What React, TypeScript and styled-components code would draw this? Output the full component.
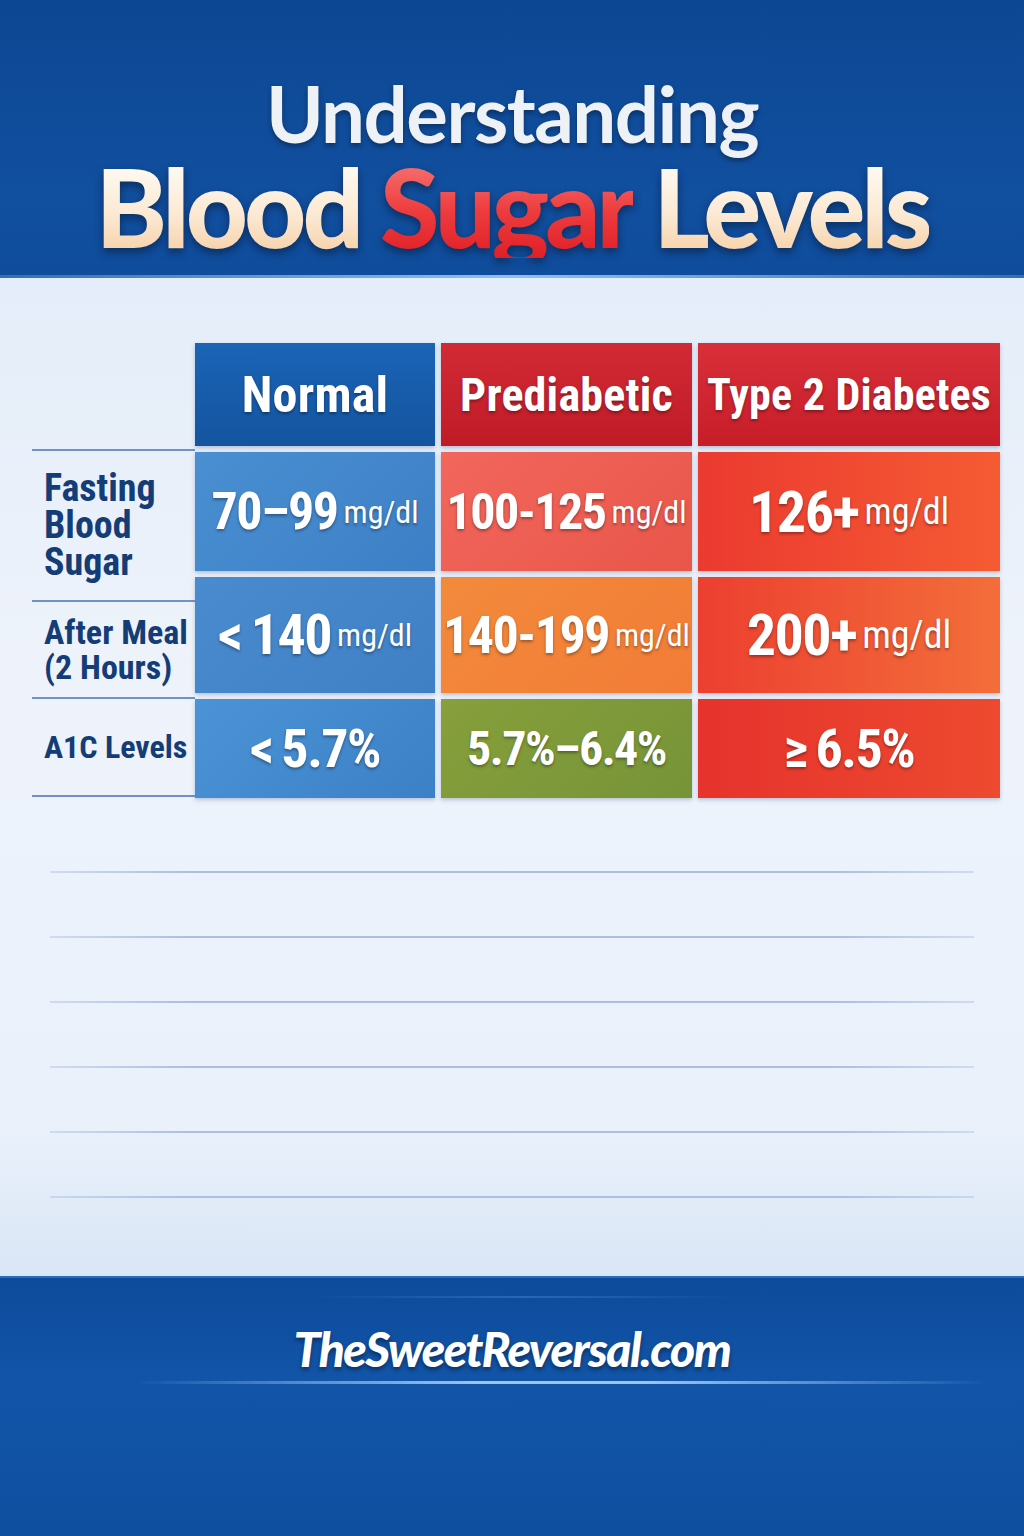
import React from 'react';
import styled, { createGlobalStyle } from 'styled-components';

const GlobalStyle = createGlobalStyle`
  html, body {
    margin: 0;
    padding: 0;
  }
  body {
    font-family: Lato, sans-serif;
  }
`;

const condensed = `"Roboto Condensed", Roboto, Lato, sans-serif`;

const Page = styled.div`
  width: 1024px;
  height: 1536px;
  display: flex;
  flex-direction: column;
  overflow: hidden;
`;

const Header = styled.header`
  height: 278px;
  position: relative;
  display: flex;
  flex-direction: column;
  align-items: center;
  padding-top: 72px;
  box-sizing: border-box;
  background: linear-gradient(180deg, #0c4793 0%, #114f9f 70%, #0f4c9c 100%);
  &::after {
    content: '';
    position: absolute;
    left: 0;
    right: 0;
    bottom: 0;
    height: 3px;
    background: linear-gradient(90deg, rgba(140, 190, 240, 0.3), #8fc0f0 50%, rgba(140, 190, 240, 0.3));
  }
`;

const Eyebrow = styled.div`
  font-family: Lato, sans-serif;
  font-weight: 700;
  font-size: 78px;
  line-height: 82px;
  letter-spacing: -1.5px;
  color: #eef2f7;
  text-shadow: 0 3px 5px rgba(0, 0, 0, 0.35);
`;

const Headline = styled.h1`
  margin: 0;
  font-family: Lato, sans-serif;
  font-weight: 900;
  font-size: 108px;
  line-height: 104px;
  letter-spacing: -4px;
  display: flex;
  gap: 20px;
  filter: drop-shadow(0 4px 4px rgba(0, 0, 0, 0.4));
`;

const Word = styled.span<{ $red?: boolean }>`
  background: ${p =>
    p.$red
      ? 'linear-gradient(180deg, #f77a78 0%, #ee3c3e 55%, #df1f27 100%)'
      : 'linear-gradient(180deg, #fffefa 0%, #fbe8d2 60%, #f6cfa5 100%)'};
  -webkit-background-clip: text;
  background-clip: text;
  color: transparent;
`;

const Main = styled.main`
  flex: 1;
  background: linear-gradient(180deg, #e4edf9 0%, #eef3fb 40%, #eaf1fb 85%, #d9e6f6 100%);
  padding: 65px 24px 0 32px;
  display: flex;
  flex-direction: column;
`;

const Table = styled.div`
  display: flex;
`;

const LabelColumn = styled.div`
  width: 163px;
  display: flex;
  flex-direction: column;
  padding-top: 106px;
`;

const Label = styled.div<{ $h: number; $size: number; $lh: number }>`
  height: ${p => p.$h}px;
  box-sizing: border-box;
  border-top: 2px solid #6f93c6;
  display: flex;
  align-items: center;
  padding-left: 12px;
  font-family: ${condensed};
  font-weight: 700;
  font-size: ${p => p.$size}px;
  line-height: ${p => p.$lh}px;
  white-space: nowrap;
  color: #143d77;
  &:last-child {
    border-bottom: 2px solid #6f93c6;
  }
`;

const Grid = styled.div`
  display: grid;
  grid-template-columns: 240px 251px 302px;
  grid-template-rows: 103px 119px 116px 99px;
  column-gap: 6px;
  row-gap: 6px;
`;

const Cell = styled.div<{ $bg: string }>`
  background: ${p => p.$bg};
  display: flex;
  align-items: center;
  justify-content: center;
  box-shadow: 0 2px 4px rgba(20, 50, 100, 0.25);
  color: #fff;
  font-family: ${condensed};
  text-shadow: 0 2px 3px rgba(0, 0, 0, 0.35);
  white-space: nowrap;
`;

const HeadText = styled.span<{ $size: number }>`
  font-weight: 700;
  font-size: ${p => p.$size}px;
  letter-spacing: 0.2px;
`;

const Num = styled.span<{ $size: number }>`
  font-weight: 700;
  font-size: ${p => p.$size}px;
  letter-spacing: -1.5px;
`;

const Unit = styled.span<{ $size: number }>`
  font-weight: 400;
  font-size: ${p => p.$size}px;
  margin-left: 6px;
`;

const Rules = styled.div`
  margin-top: 73px;
  padding: 0 26px 0 18px;
  display: flex;
  flex-direction: column;
  gap: 63px;
`;

const Rule = styled.div`
  height: 2px;
  background: linear-gradient(90deg, rgba(140, 170, 215, 0.3), #a9c0e2 15%, #a9c0e2 85%, rgba(140, 170, 215, 0.3));
`;

const Footer = styled.footer`
  height: 260px;
  position: relative;
  display: flex;
  flex-direction: column;
  align-items: center;
  padding-top: 42px;
  box-sizing: border-box;
  background: linear-gradient(180deg, #0d4a9b 0%, #1255a8 40%, #0f4fa0 100%);
  border-top: 2px solid #2d6bbd;
  &::before {
    content: '';
    position: absolute;
    top: 18px;
    left: 30%;
    right: 28%;
    height: 2px;
    background: linear-gradient(90deg, rgba(60, 120, 200, 0), rgba(60, 120, 200, 0.6) 50%, rgba(60, 120, 200, 0));
  }
`;

const Site = styled.div`
  font-family: Lato, sans-serif;
  font-weight: 900;
  font-style: italic;
  font-size: 48px;
  letter-spacing: -1.5px;
  color: #fff;
  text-shadow: 0 3px 4px rgba(0, 0, 0, 0.4);
`;

const Glow = styled.div`
  margin-top: 4px;
  margin-left: 100px;
  width: 850px;
  height: 3px;
  border-radius: 2px;
  background: linear-gradient(90deg, rgba(120, 170, 230, 0), #9cc6f2 40%, #9cc6f2 60%, rgba(120, 170, 230, 0));
`;

const headers = [
  { text: 'Normal', bg: 'linear-gradient(180deg, #1b64b6, #14549f)', size: 50 },
  { text: 'Prediabetic', bg: 'linear-gradient(180deg, #d22a35, #bf1b27)', size: 46 },
  { text: 'Type 2 Diabetes', bg: 'linear-gradient(180deg, #d92f39, #c61d29)', size: 44 },
];

const rows = [
  [
    { num: '70–99', unit: 'mg/dl', size: 52, usize: 32, bg: 'linear-gradient(135deg, #4a8fd2, #3d7fc6)' },
    { num: '100-125', unit: 'mg/dl', size: 50, usize: 32, bg: 'linear-gradient(135deg, #f2665c, #e9564a)' },
    { num: '126+', unit: 'mg/dl', size: 58, usize: 36, bg: 'linear-gradient(90deg, #eb3a30, #f55b33)' },
  ],
  [
    { num: '<\u2009140', unit: 'mg/dl', size: 56, usize: 32, bg: 'linear-gradient(135deg, #4a8bd0, #3f80c5)' },
    { num: '140-199', unit: 'mg/dl', size: 52, usize: 32, bg: 'linear-gradient(135deg, #f28a3c, #f27c36)' },
    { num: '200+', unit: 'mg/dl', size: 58, usize: 38, bg: 'linear-gradient(90deg, #ec3f30, #f36e3a)' },
  ],
  [
    { num: '<\u20095.7%', unit: '', size: 54, usize: 0, bg: 'linear-gradient(135deg, #4b93d6, #3c80c6)' },
    { num: '5.7%–6.4%', unit: '', size: 48, usize: 0, bg: 'linear-gradient(135deg, #879f3c, #769437)' },
    { num: '≥\u20096.5%', unit: '', size: 54, usize: 0, bg: 'linear-gradient(90deg, #e6332d, #ed4a2f)' },
  ],
];

export default function App() {
  return (
    <>
      <GlobalStyle />
      <Page>
        <Header>
          <Eyebrow>Understanding</Eyebrow>
          <Headline>
            <Word>Blood</Word>
            <Word $red>Sugar</Word>
            <Word>Levels</Word>
          </Headline>
        </Header>
        <Main>
          <Table>
            <LabelColumn>
              <Label $h={151} $size={38} $lh={37}>
                Fasting
                <br />
                Blood
                <br />
                Sugar
              </Label>
              <Label $h={97} $size={34} $lh={35}>
                After Meal
                <br />
                (2 Hours)
              </Label>
              <Label $h={100} $size={32} $lh={34}>
                A1C Levels
              </Label>
            </LabelColumn>
            <Grid>
              {headers.map(h => (
                <Cell key={h.text} $bg={h.bg}>
                  <HeadText $size={h.size}>{h.text}</HeadText>
                </Cell>
              ))}
              {rows.map((row, i) =>
                row.map((c, j) => (
                  <Cell key={`${i}-${j}`} $bg={c.bg}>
                    <Num $size={c.size}>{c.num}</Num>
                    {c.unit && <Unit $size={c.usize}>{c.unit}</Unit>}
                  </Cell>
                ))
              )}
            </Grid>
          </Table>
          <Rules>
            {[0, 1, 2, 3, 4, 5].map(n => (
              <Rule key={n} />
            ))}
          </Rules>
        </Main>
        <Footer>
          <Site>TheSweetReversal.com</Site>
          <Glow />
        </Footer>
      </Page>
    </>
  );
}
